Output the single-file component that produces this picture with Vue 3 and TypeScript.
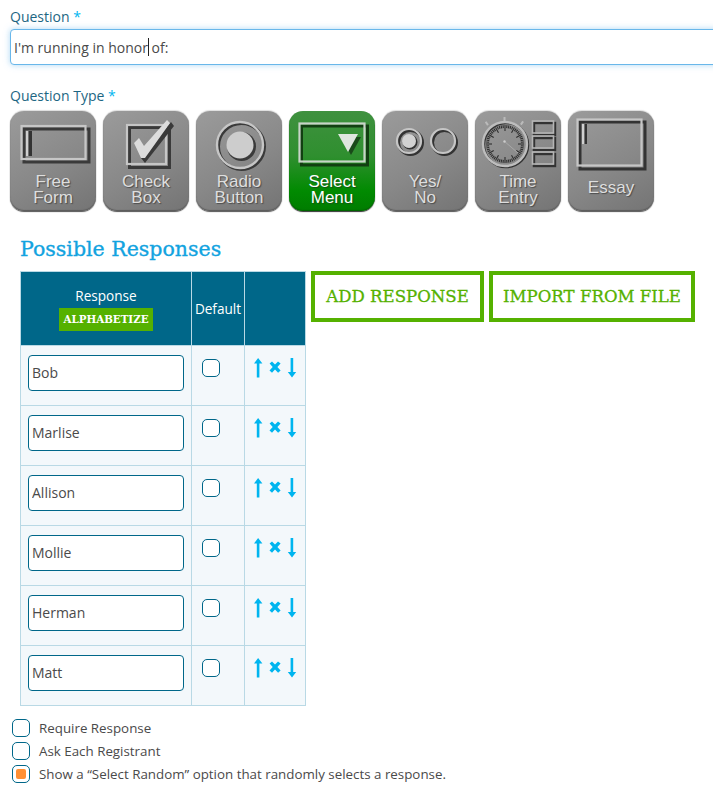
<script setup lang="ts">
import { computed } from 'vue'

interface QType { id: string; lines: string[]; active?: boolean; single?: boolean }

const types: QType[] = [
  { id: 'free', lines: ['Free', 'Form'] },
  { id: 'check', lines: ['Check', 'Box'] },
  { id: 'radio', lines: ['Radio', 'Button'] },
  { id: 'select', lines: ['Select', 'Menu'], active: true },
  { id: 'yesno', lines: ['Yes/', 'No'] },
  { id: 'time', lines: ['Time', 'Entry'] },
  { id: 'essay', lines: ['Essay'], single: true },
]

const responses = ['Bob', 'Marlise', 'Allison', 'Mollie', 'Herman', 'Matt']

const options = [
  { label: 'Require Response', checked: false },
  { label: 'Ask Each Registrant', checked: false },
  { label: 'Show a “Select Random” option that randomly selects a response.', checked: true },
]

const ticks = computed(() => {
  const out: { x1: number; y1: number; x2: number; y2: number }[] = []
  for (let i = 0; i < 60; i++) {
    const a = (i / 60) * Math.PI * 2
    const inner = i % 5 === 0 ? 13 : 16
    out.push({
      x1: 30 + Math.cos(a) * inner,
      y1: 33 + Math.sin(a) * inner,
      x2: 30 + Math.cos(a) * 19,
      y2: 33 + Math.sin(a) * 19,
    })
  }
  return out
})
</script>

<template>
  <div class="page">
    <label class="field-label">Question <span class="req">*</span></label>
    <div class="question-wrap">
      <input class="question" type="text" value="I'm running in honor of:" />
      <span class="caret"></span>
    </div>

    <label class="field-label type-label">Question Type <span class="req">*</span></label>
    <div class="types">
      <button v-for="t in types" :key="t.id" class="type" :class="{ active: t.active }" type="button">
        <svg class="glyph" viewBox="0 0 86 66" width="86" height="66" fill="none">
          <template v-if="t.id === 'free'">
            <rect x="14" y="18" width="65" height="33" stroke="#3a3a3a" stroke-width="3" />
            <rect x="11.5" y="15" width="64" height="33" stroke="#c6c6c6" stroke-width="2.2" />
            <rect x="18" y="20" width="4" height="25" fill="#333" />
            <rect x="16" y="20" width="2.4" height="25" fill="#d0d0d0" />
          </template>
          <template v-else-if="t.id === 'check'">
            <rect x="26.5" y="16.5" width="40" height="40" stroke="#3a3a3a" stroke-width="3" />
            <rect x="24" y="14" width="39" height="39" stroke="#c6c6c6" stroke-width="2.2" />
            <path d="M38 47 L68 11 L71 15 L42 52 Z" fill="#3a3a3a" />
            <path d="M31 32 L36 27 L41 35 L64 9 L67 12 L42 47 L38 47 Z" fill="#dcdcdc" />
          </template>
          <template v-else-if="t.id === 'radio'">
            <circle cx="45.5" cy="35.5" r="23" stroke="#3a3a3a" stroke-width="3" />
            <circle cx="44" cy="34" r="23" stroke="#c6c6c6" stroke-width="2.4" />
            <circle cx="45.5" cy="35.5" r="14.5" fill="#3a3a3a" />
            <circle cx="44" cy="34" r="13.5" fill="#cdcdcd" />
          </template>
          <template v-else-if="t.id === 'select'">
            <rect x="12.5" y="15" width="66" height="39" stroke="#123f12" stroke-width="3" />
            <rect x="10.5" y="12.5" width="65" height="38" stroke="#c8d4c8" stroke-width="2.2" />
            <path d="M52 26 L72 26 L62 44 Z" fill="#1a4a1a" />
            <path d="M49 23 L69 23 L59 41 Z" fill="#dfe6df" />
          </template>
          <template v-else-if="t.id === 'yesno'">
            <circle cx="28.5" cy="31.5" r="12" stroke="#333" stroke-width="3" />
            <circle cx="27" cy="30" r="12" stroke="#c6c6c6" stroke-width="2.2" />
            <circle cx="28" cy="31" r="7.5" fill="#333" />
            <circle cx="27" cy="30" r="7" fill="#d2d2d2" />
            <circle cx="62.5" cy="31.5" r="12" stroke="#333" stroke-width="3" />
            <circle cx="61" cy="30" r="12" stroke="#c6c6c6" stroke-width="2.2" />
          </template>
          <template v-else-if="t.id === 'time'">
            <rect x="28.5" y="6" width="2" height="5" fill="#bbb" />
            <rect x="11" y="11" width="2" height="4" fill="#bbb" transform="rotate(-35 11 13)" />
            <rect x="46" y="10" width="2" height="4" fill="#bbb" transform="rotate(35 47 12)" />
            <circle cx="31" cy="34" r="22" stroke="#333" stroke-width="2.5" />
            <circle cx="30" cy="33" r="22" stroke="#bdbdbd" stroke-width="2.4" />
            <line
              v-for="(k, i) in ticks"
              :key="i"
              :x1="k.x1"
              :y1="k.y1"
              :x2="k.x2"
              :y2="k.y2"
              stroke="#2e2e2e"
              stroke-width="1.1"
            />
            <path d="M29 30 L43 42" stroke="#a8a8a8" stroke-width="1" />
            <circle cx="29.5" cy="30.5" r="1.2" fill="#ccc" />
            <g v-for="y in [10, 25, 41]" :key="y">
              <rect x="59" :y="y + 2" width="21" height="12" stroke="#333" stroke-width="2.4" />
              <rect x="57.5" :y="y" width="21" height="12" stroke="#b5b5b5" stroke-width="1.6" />
            </g>
          </template>
          <template v-else>
            <rect x="12" y="11" width="65" height="47" stroke="#333" stroke-width="3" />
            <rect x="9.5" y="8.5" width="64" height="46" stroke="#c6c6c6" stroke-width="2.2" />
            <rect x="16" y="13" width="3" height="20" fill="#333" />
            <rect x="14" y="13" width="2.4" height="20" fill="#d0d0d0" />
          </template>
        </svg>
        <span class="caption" :class="{ single: t.single }">
          <span v-for="l in t.lines" :key="l" class="caption-line">{{ l }}</span>
        </span>
      </button>
    </div>

    <section class="responses">
      <h2 class="heading">Possible Responses</h2>
      <div class="response-body">
        <table class="grid">
          <thead>
            <tr>
              <th class="col-response">
                <div class="head-title">Response</div>
                <span class="alpha">ALPHABETIZE</span>
              </th>
              <th class="col-default">Default</th>
              <th class="col-actions"></th>
            </tr>
          </thead>
          <tbody>
            <tr v-for="r in responses" :key="r">
              <td class="cell-input"><input class="response-input" type="text" :value="r" /></td>
              <td class="cell-check"><span class="box"></span></td>
              <td class="cell-actions">
                <svg viewBox="0 0 44 20" width="44" height="20" fill="#00b5ef">
                  <path d="M2.8 19.5 H5.4 V5.5 H8.4 L4.1 0 L0 5.5 H2.8 Z" />
                  <path d="M15.6 5.4 L18 3.4 L21 6.5 L24 3.4 L26.6 5.5 L23.4 9 L26.6 12.5 L24.1 14.7 L21 11.5 L18 14.7 L15.5 12.5 L18.7 9 Z" />
                  <path d="M36.6 0 H39.2 V14 H42.2 L38 19.5 L33.8 14 H36.6 Z" />
                </svg>
              </td>
            </tr>
          </tbody>
        </table>
        <div class="actions">
          <button class="outline add" type="button">ADD RESPONSE</button>
          <button class="outline import" type="button">IMPORT FROM FILE</button>
        </div>
      </div>
    </section>

    <ul class="options">
      <li v-for="o in options" :key="o.label" class="option">
        <span class="box"><span v-if="o.checked" class="tick"></span></span>
        <span>{{ o.label }}</span>
      </li>
    </ul>
  </div>
</template>

<style>
html, body { margin: 0; background: #fff; }
</style>

<style scoped>
.page {
  width: 713px;
  height: 792px;
  overflow: hidden;
  box-sizing: border-box;
  padding: 8px 0 0 10px;
  font-family: "Open Sans", sans-serif;
  color: #4a4a4a;
}
.field-label {
  display: block;
  font-size: 14px;
  line-height: 18px;
  color: #1d6683;
}
.req { color: #00b5ef; }
.question-wrap {
  position: relative;
  margin-top: 3px;
  width: 730px;
}
.question {
  display: block;
  box-sizing: border-box;
  width: 100%;
  height: 36px;
  padding: 0 3px;
  border: 1px solid #69b7ea;
  border-radius: 4px;
  box-shadow: 0 0 6px rgba(105, 183, 234, 0.55);
  outline: none;
  font: 14px "Open Sans", sans-serif;
  color: #4a4a4a;
  background: #fff;
}
.caret {
  position: absolute;
  left: 138px;
  top: 9px;
  width: 1px;
  height: 18px;
  background: #222;
}
.type-label { margin-top: 22px; }
.types {
  display: flex;
  gap: 7px;
  margin-top: 6px;
}
.type {
  flex: 0 0 86px;
  width: 86px;
  height: 100px;
  padding: 0;
  border: 0;
  border-radius: 14px;
  display: flex;
  flex-direction: column;
  background: linear-gradient(150deg, #9b9b9b 0%, #888 55%, #747474 100%);
  box-shadow: inset 0 -1px 1px #5a5a5a, 0 1px 1px #555, 0 -1px 1px #ddd;
}
.type.active {
  background: linear-gradient(180deg, #3f913f 0%, #2f8f2f 45%, #018a01 80%, #007c00 100%);
  box-shadow: inset 0 -1px 1px #006200, 0 1px 1px #333;
}
.glyph { display: block; flex: none; }
.caption {
  display: flex;
  flex-direction: column;
  align-items: center;
  font-family: "Liberation Sans", Arial, sans-serif;
  font-size: 17px;
  line-height: 16px;
  color: #dedede;
  text-shadow: 1px 1px 1px #4c4c4c;
  margin-top: -3px;
}
.caption.single { margin-top: 3px; }
.active .caption { color: #fff; text-shadow: 1px 1px 1px #145214; }
.responses { padding-left: 10px; }
.heading {
  margin: 24px 0 0;
  font-family: "DejaVu Serif", serif;
  font-weight: 400;
  font-size: 20.5px;
  line-height: 28px;
  color: #12a3e0;
  -webkit-text-stroke: 0.35px #12a3e0;
}
.response-body {
  display: flex;
  align-items: flex-start;
  gap: 5px;
  margin-top: 8px;
}
.grid {
  border-collapse: collapse;
  width: 286px;
  table-layout: fixed;
  flex: none;
}
.grid th {
  background: #006789;
  color: #fff;
  font-weight: 400;
  font-size: 13.6px;
  border: 1px solid #b9d9e5;
  padding: 0;
  height: 73px;
}
.head-title { margin-top: -1px; }
.col-response { width: 170px; }
.col-default { width: 52px; }
.col-actions { width: 60px; }
.alpha {
  display: inline-block;
  margin-top: 3px;
  background: #55b100;
  font-family: "DejaVu Serif", serif;
  font-weight: 700;
  font-size: 10.3px;
  line-height: 23px;
  width: 94px;
  white-space: nowrap;
  color: #fff;
}
.grid td {
  box-sizing: border-box;
  background: #f3f8fb;
  border: 1px solid #b9d9e5;
  padding: 0;
  height: 60px;
  vertical-align: top;
}
.cell-input { padding: 9px 0 0 7px !important; }
.response-input {
  display: block;
  box-sizing: border-box;
  width: 156px;
  height: 36px;
  padding: 0 3px 2px;
  border: 1px solid #006789;
  border-radius: 4px;
  background: #fff;
  font: 14px "Open Sans", sans-serif;
  color: #4a4a4a;
  outline: none;
}
.cell-check { padding: 13px 0 0 10px !important; }
.cell-check .box { display: flex; }
.cell-actions { padding: 12px 0 0 9px !important; }
.cell-actions svg { display: block; }
.box {
  box-sizing: border-box;
  display: inline-flex;
  align-items: center;
  justify-content: center;
  flex: none;
  width: 18px;
  height: 18px;
  border: 1px solid #006789;
  border-radius: 5px;
  background: #fff;
}
.tick {
  width: 10px;
  height: 10px;
  border-radius: 2px;
  background: #ff8f33;
}
.actions { display: flex; gap: 5px; }
.outline {
  box-sizing: border-box;
  height: 51px;
  border: 4px solid #55b100;
  background: #fff;
  color: #55b100;
  font-family: "DejaVu Serif", serif;
  font-size: 16.6px;
  -webkit-text-stroke: 0.3px #55b100;
  padding: 0;
  white-space: nowrap;
}
.add { width: 173px; }
.import { width: 206px; }
.options {
  list-style: none;
  margin: 13px 0 0 2px;
  padding: 0;
}
.option {
  display: flex;
  align-items: center;
  gap: 9px;
  height: 18px;
  margin-bottom: 5px;
  font-size: 13.35px;
  line-height: 18px;
}
</style>
